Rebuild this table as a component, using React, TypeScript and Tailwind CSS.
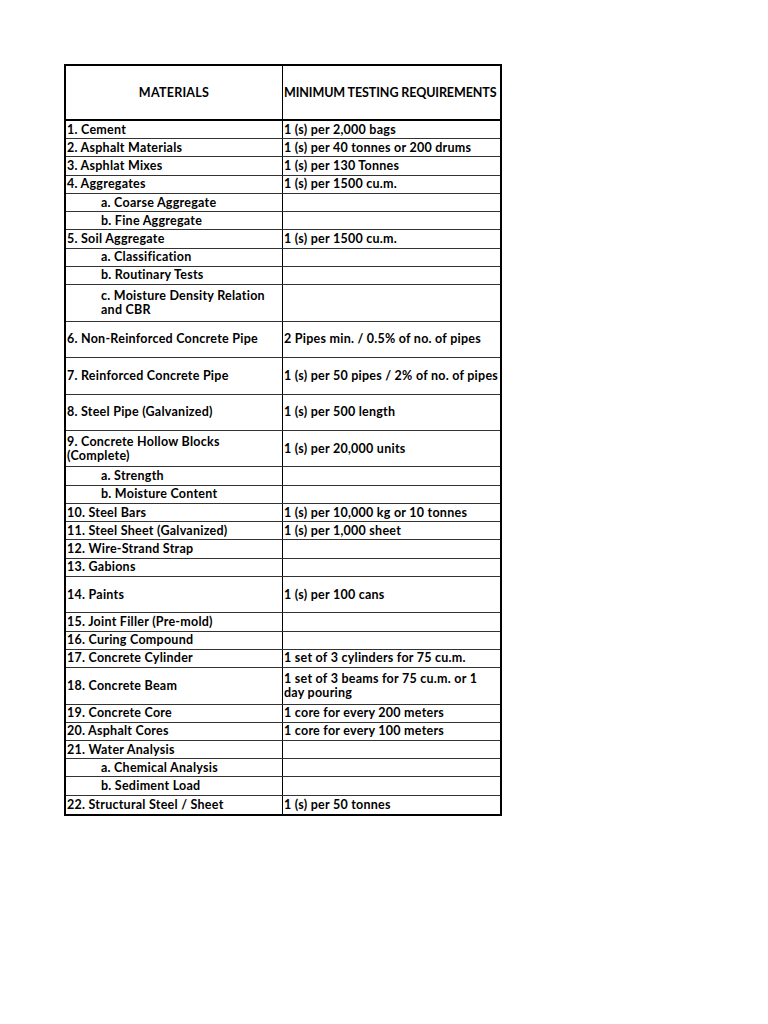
import React from 'react';

type Row = { left: string[]; right?: string[]; sub?: boolean; tall?: boolean };

const ROWS: Row[] = [
  { left: ['1. Cement'], right: ['1 (s) per 2,000 bags'] },
  { left: ['2. Asphalt Materials'], right: ['1 (s) per 40 tonnes or 200 drums'] },
  { left: ['3. Asphlat Mixes'], right: ['1 (s) per 130 Tonnes'] },
  { left: ['4. Aggregates'], right: ['1 (s) per 1500 cu.m.'] },
  { left: ['a. Coarse Aggregate'], sub: true },
  { left: ['b. Fine Aggregate'], sub: true },
  { left: ['5. Soil Aggregate'], right: ['1 (s) per 1500 cu.m.'] },
  { left: ['a. Classification'], sub: true },
  { left: ['b. Routinary Tests'], sub: true },
  { left: ['c. Moisture Density Relation', 'and CBR'], sub: true, tall: true },
  { left: ['6. Non-Reinforced Concrete Pipe'], right: ['2 Pipes min. / 0.5% of no. of pipes'], tall: true },
  { left: ['7. Reinforced Concrete Pipe'], right: ['1 (s) per 50 pipes / 2% of no. of pipes'], tall: true },
  { left: ['8. Steel Pipe (Galvanized)'], right: ['1 (s) per 500 length'], tall: true },
  { left: ['9. Concrete Hollow Blocks', '(Complete)'], right: ['1 (s) per 20,000 units'], tall: true },
  { left: ['a. Strength'], sub: true },
  { left: ['b. Moisture Content'], sub: true },
  { left: ['10. Steel Bars'], right: ['1 (s) per 10,000 kg or 10 tonnes'] },
  { left: ['11. Steel Sheet (Galvanized)'], right: ['1 (s) per 1,000 sheet'] },
  { left: ['12. Wire-Strand Strap'] },
  { left: ['13. Gabions'] },
  { left: ['14. Paints'], right: ['1 (s) per 100 cans'], tall: true },
  { left: ['15. Joint Filler (Pre-mold)'] },
  { left: ['16. Curing Compound'] },
  { left: ['17. Concrete Cylinder'], right: ['1 set of 3 cylinders for 75 cu.m.'] },
  { left: ['18. Concrete Beam'], right: ['1 set of 3 beams for 75 cu.m. or 1', 'day pouring'], tall: true },
  { left: ['19. Concrete Core'], right: ['1 core for every 200 meters'] },
  { left: ['20. Asphalt Cores'], right: ['1 core for every 100 meters'] },
  { left: ['21. Water Analysis'] },
  { left: ['a. Chemical Analysis'], sub: true },
  { left: ['b. Sediment Load'], sub: true },
  { left: ['22. Structural Steel / Sheet'], right: ['1 (s) per 50 tonnes'] },
];

const Lines = ({ lines }: { lines?: string[] }) => (
  <>
    {lines?.map((l, i) => (
      <span key={i} className="block whitespace-nowrap">
        {l}
      </span>
    ))}
  </>
);

export default function App() {
  return (
    <div className="min-h-[1024px] w-full bg-white pt-[64px] pl-[64px] font-['Lato',sans-serif] text-[12.5px] font-bold leading-[14px] tracking-[0.25px] text-black">
      <div className="w-[438px] border-2 border-black">
        <div className="grid h-[55px] grid-cols-[217px_1fr] border-b-2 border-black">
          <div className="flex items-center justify-center border-r border-black pt-[1px]">MATERIALS</div>
          <div className="flex items-center pl-[1px] pt-[1px] whitespace-nowrap tracking-[-0.1px]">
            MINIMUM TESTING REQUIREMENTS
          </div>
        </div>
        {ROWS.map((r, i) => (
          <div
            key={i}
            className={`grid grid-cols-[217px_1fr] ${r.tall ? 'h-[36.47px]' : 'h-[18.24px]'} ${
              i < ROWS.length - 1 ? 'border-b border-[#333333]' : ''
            }`}
          >
            <div
              className={`flex flex-col justify-center border-r border-black ${r.sub ? 'pl-[35px]' : 'pl-[1px]'}`}
            >
              <Lines lines={r.left} />
            </div>
            <div className="flex flex-col justify-center pl-[1px]">
              <Lines lines={r.right} />
            </div>
          </div>
        ))}
      </div>
    </div>
  );
}
